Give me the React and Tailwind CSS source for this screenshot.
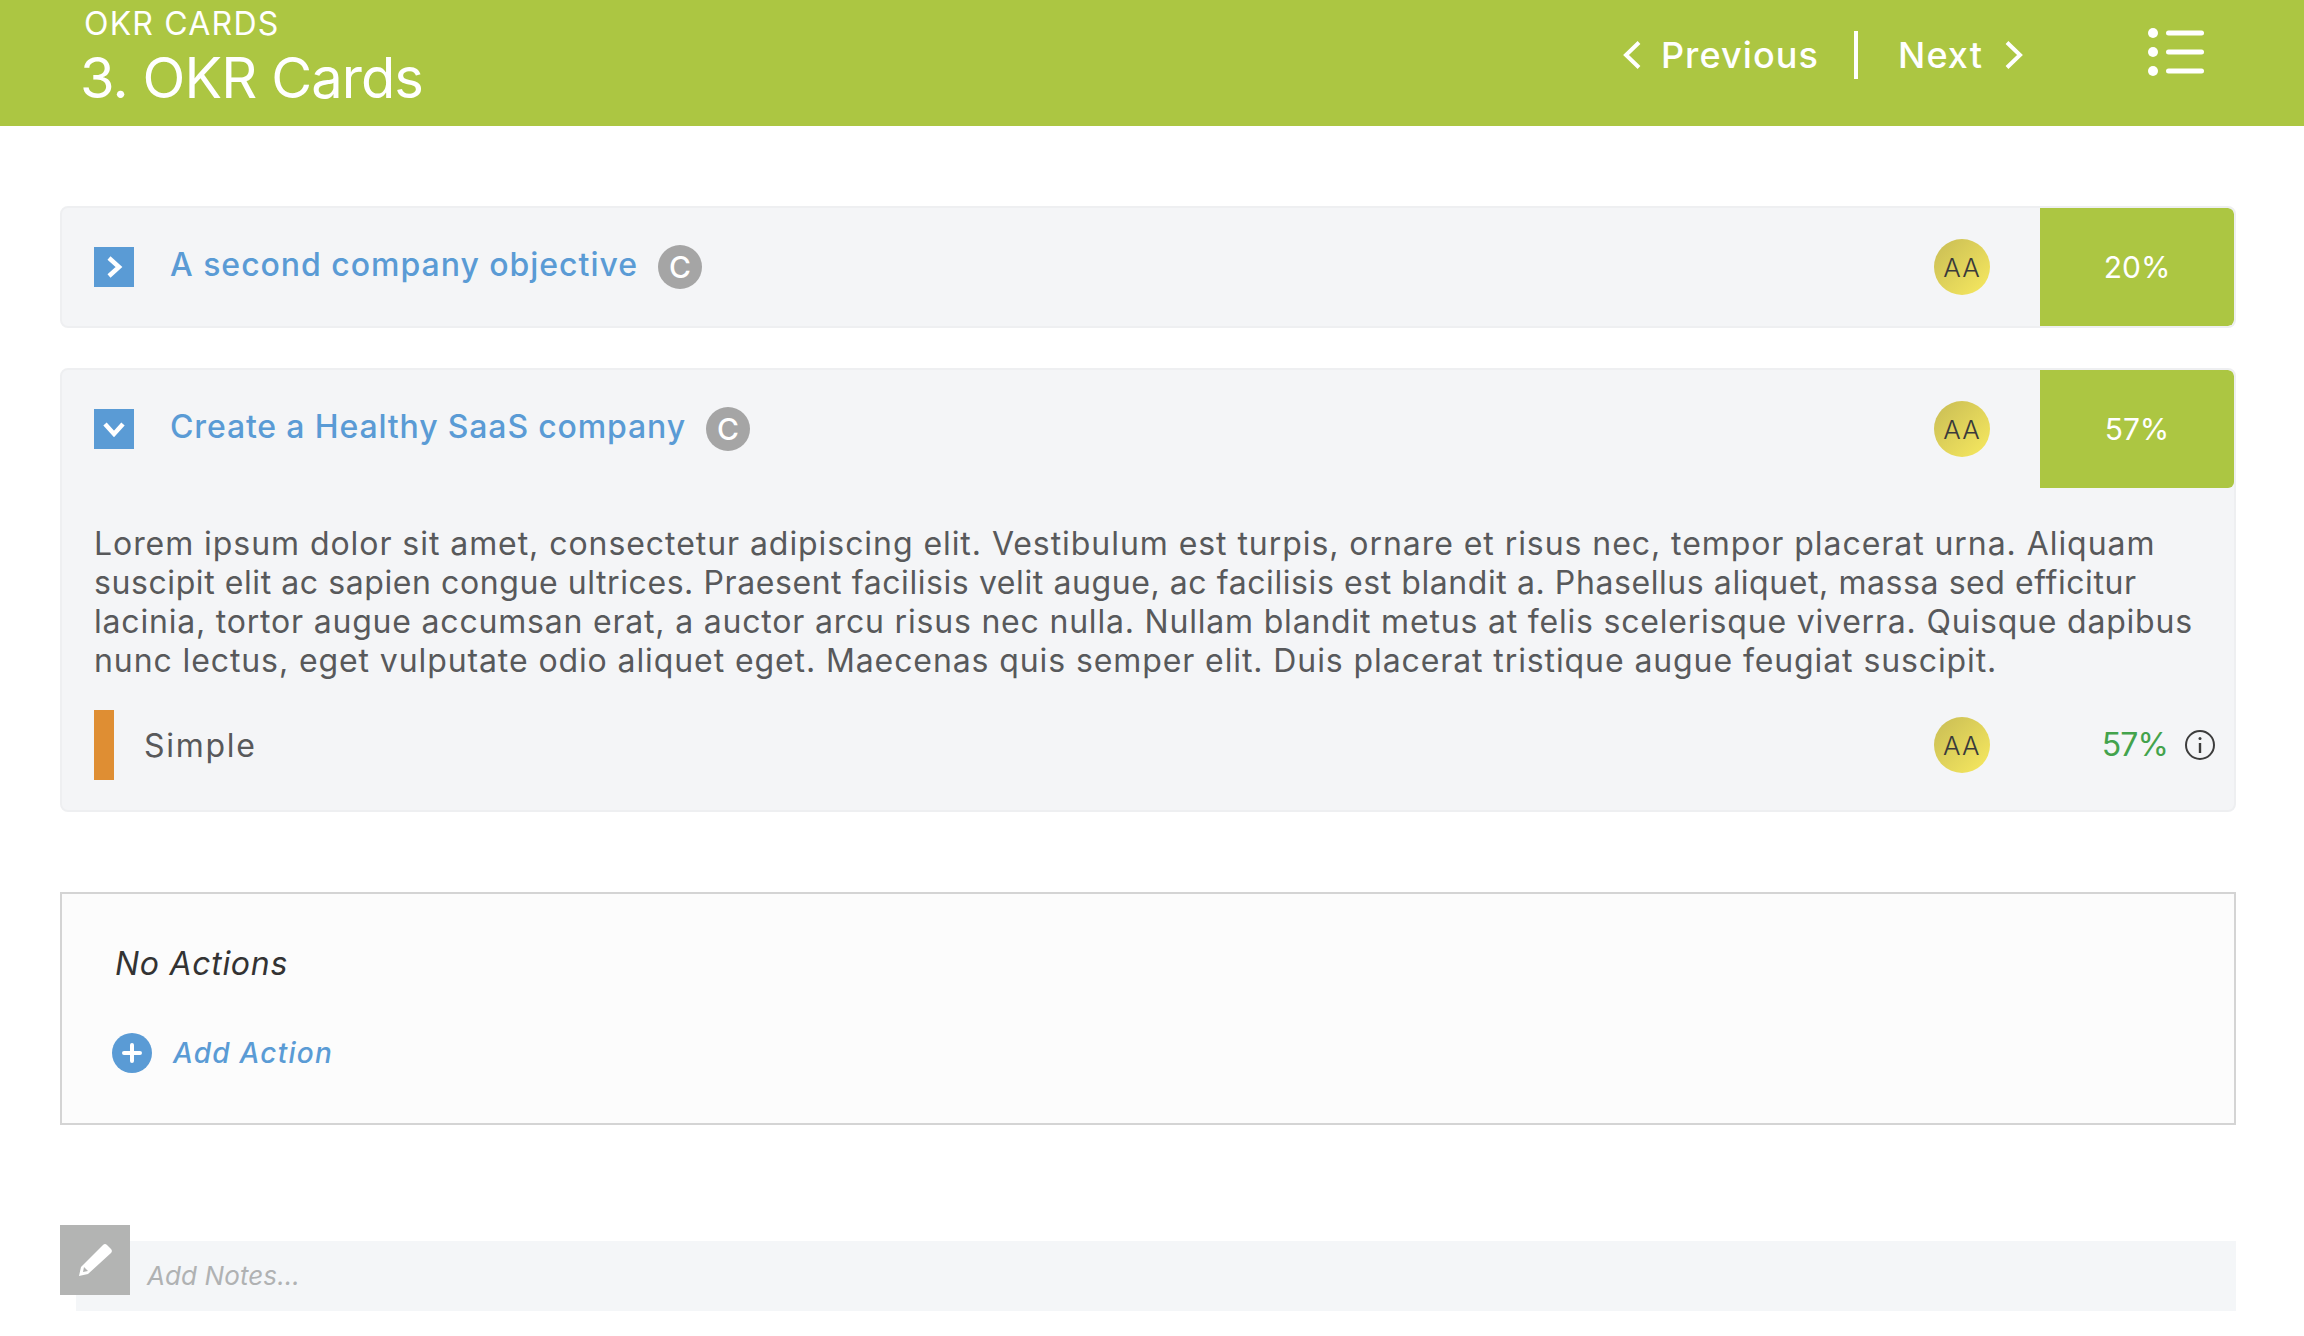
import React from "react";

const FONT = "font-['Inter','Liberation_Sans',sans-serif]";

function Avatar() {
  return (
    <div className="w-14 h-14 rounded-full bg-gradient-to-br from-[#c8bc55] to-[#f8ea5f] flex items-center justify-center shrink-0 text-[26px] font-light tracking-[1px] text-[#3a3a3a]">
      AA
    </div>
  );
}

function Toggle({ open }) {
  return (
    <div className="w-10 h-10 bg-[#5a9bd5] flex items-center justify-center shrink-0">
      <svg width="40" height="40" viewBox="0 0 40 40" fill="none" stroke="#fff" strokeWidth="4.5">
        {open ? <path d="M11 15l9 10 9-10" /> : <path d="M15 11l10 9-10 9" />}
      </svg>
    </div>
  );
}

function CBadge() {
  return (
    <div className="w-11 h-11 rounded-full bg-[#a5a5a5] text-white flex items-center justify-center text-[30px] font-medium shrink-0">
      C
    </div>
  );
}

function CardHead({ open, title, pct, titleCls }) {
  return (
    <div className="flex items-center h-[118px]">
      <div className="ml-[32px]"><Toggle open={open} /></div>
      <div className={`ml-[36px] text-[32px] font-medium text-[#5a9bd5] leading-none -translate-y-[2px] ${titleCls}`}>{title}</div>
      <div className="ml-[20px]"><CBadge /></div>
      <div className="ml-auto mr-[50px]"><Avatar /></div>
      <div className="w-[194px] h-[118px] bg-[#acc642] text-white text-[30px] flex items-center justify-center rounded-r-[6px]">
        {pct}
      </div>
    </div>
  );
}

export default function App() {
  return (
    <div className={`${FONT} bg-white w-[2304px] h-[1336px] overflow-hidden`}>
      <header className="h-[126px] bg-[#acc642] text-white flex items-start">
        <div className="ml-[84px] mt-[6px]">
          <div className="text-[32px] leading-[36px] tracking-[1.2px]">OKR CARDS</div>
          <div className="-ml-[4px] mt-[2px] text-[56px] leading-[68px] tracking-[-0.9px]">3. OKR Cards</div>
        </div>
        <div className="ml-auto flex items-center h-[110px]">
          <svg width="18" height="28" viewBox="0 0 18 28" fill="none" stroke="#fff" strokeWidth="4">
            <path d="M16 1.5L3 14l13 12.5" />
          </svg>
          <span className="ml-[20px] text-[36px] font-medium tracking-[1.1px]">Previous</span>
          <div className="ml-[35px] w-1 h-[48px] bg-white" />
          <span className="ml-[40px] text-[36px] font-medium tracking-[1.1px]">Next</span>
          <svg className="ml-[22px]" width="18" height="28" viewBox="0 0 18 28" fill="none" stroke="#fff" strokeWidth="4">
            <path d="M2 1.5L15 14 2 26.5" />
          </svg>
          <svg className="ml-[125px] mr-[100px] -translate-y-[3px]" width="56" height="50" viewBox="0 0 56 50" fill="#fff">
            <circle cx="5" cy="6" r="5" />
            <circle cx="5" cy="25" r="5" />
            <circle cx="5" cy="44" r="5" />
            <rect x="18" y="3.500" width="38" height="5" rx="2.5" />
            <rect x="18" y="22.500" width="38" height="5" rx="2.5" />
            <rect x="18" y="41.500" width="38" height="5" rx="2.5" />
          </svg>
        </div>
      </header>

      <main className="pl-[60px] pr-[68px] pt-[80px]">
        <section className="h-[122px] border-2 border-[#eeeff1] rounded-[8px] bg-[#f4f5f7] overflow-hidden">
          <CardHead title="A second company objective" pct="20%" titleCls="tracking-[0.97px]" />
        </section>

        <section className="mt-[40px] h-[444px] border-2 border-[#eeeff1] rounded-[8px] bg-[#f4f5f7] overflow-hidden">
          <CardHead open title="Create a Healthy SaaS company" pct="57%" titleCls="tracking-[0.85px]" />
          <p className="ml-[32px] mt-[36px] text-[32px] leading-[39px] text-[#58595b] whitespace-nowrap">
            <span className="block tracking-[0.94px]">Lorem ipsum dolor sit amet, consectetur adipiscing elit. Vestibulum est turpis, ornare et risus nec, tempor placerat urna. Aliquam</span>
            <span className="block tracking-[0.58px]">suscipit elit ac sapien congue ultrices. Praesent facilisis velit augue, ac facilisis est blandit a. Phasellus aliquet, massa sed efficitur</span>
            <span className="block tracking-[0.8px]">lacinia, tortor augue accumsan erat, a auctor arcu risus nec nulla. Nullam blandit metus at felis scelerisque viverra. Quisque dapibus</span>
            <span className="block tracking-[0.9px]">nunc lectus, eget vulputate odio aliquet eget. Maecenas quis semper elit. Duis placerat tristique augue feugiat suscipit.</span>
          </p>
          <div className="mt-[30px] ml-[32px] flex items-center h-[70px]">
            <div className="w-5 h-[70px] bg-[#df8e33]" />
            <span className="ml-[30px] text-[32px] text-[#58595b] tracking-[1.7px] translate-y-[1px]">Simple</span>
            <div className="ml-auto mr-[112px]"><Avatar /></div>
            <span className="text-[32px] text-[#43a34c] tracking-[-0.9px]">57%</span>
            <svg className="ml-[16px] mr-[18px]" width="32" height="32" viewBox="0 0 32 32" fill="none" stroke="#3d3d3d" strokeWidth="2">
              <circle cx="16" cy="16" r="14" />
              <path d="M16 14v10" strokeWidth="2.4" />
              <circle cx="16" cy="9.500" r="1.5" fill="#3d3d3d" stroke="none" />
            </svg>
          </div>
        </section>

        <section className="mt-[80px] h-[233px] border-2 border-[#d4d4d4] bg-[#fcfcfc]">
          <div className="ml-[53px] mt-[50px] text-[32px] leading-[40px] italic text-[#333] tracking-[0.7px]">No Actions</div>
          <div className="ml-[50px] mt-[48px] flex items-center">
            <div className="w-10 h-10 rounded-full bg-[#5a9bd5] flex items-center justify-center">
              <svg width="20" height="20" viewBox="0 0 20 20" stroke="#fff" strokeWidth="4" strokeLinecap="round">
                <path d="M10 2v16M2 10h16" />
              </svg>
            </div>
            <span className="ml-[21px] text-[28px] italic font-medium text-[#5a9bd5] tracking-[1.2px]">Add Action</span>
          </div>
        </section>

        <section className="mt-[100px] relative h-[86px]">
          <div className="absolute left-[16px] right-0 top-[16px] h-[70px] bg-[#f4f6f8] pl-[71px] pb-[2px] flex items-center">
            <span className="text-[26px] italic text-[#b0b2b3] tracking-[0.1px]">Add Notes...</span>
          </div>
          <div className="absolute left-0 top-0 w-[70px] h-[70px] bg-[#b3b4b3]">
            <svg width="70" height="70" viewBox="0 0 70 70" fill="#fff">
              <path fillRule="evenodd" d="M43 20a3 3 0 0 1 4 0l4 4a3 3 0 0 1 0 4L28 49 19 51 21 42ZM24 42 23 47 28 46Z" />
            </svg>
          </div>
        </section>
      </main>
    </div>
  );
}
